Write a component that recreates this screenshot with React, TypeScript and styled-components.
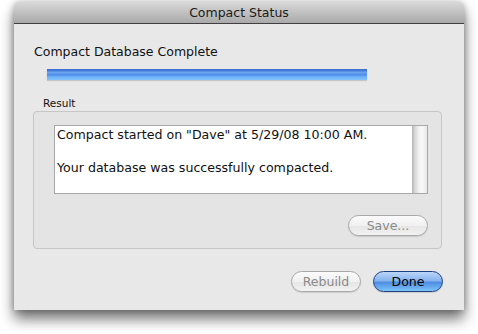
import React from "react";
import styled, { createGlobalStyle } from "styled-components";

const Global = createGlobalStyle`
  html, body { margin: 0; padding: 0; background: #ffffff; }
  body { font-family: "DejaVu Sans", "Liberation Sans", sans-serif; }
  * { box-sizing: border-box; }
`;

const Page = styled.div`
  width: 478px;
  height: 334px;
  padding: 2px 0 0 14px;
  overflow: hidden;
`;

const Window = styled.div`
  width: 450px;
  height: 308px;
  background: #e8e8e8;
  border-radius: 5px 5px 0 0;
  box-shadow: 0 9px 14px rgba(0, 0, 0, 0.55), 0 0 6px rgba(0, 0, 0, 0.25);
  display: flex;
  flex-direction: column;
`;

const TitleBar = styled.div`
  height: 22px;
  border-radius: 5px 5px 0 0;
  background: linear-gradient(#d8d8d8, #a9a9a9);
  border-bottom: 1px solid #404040;
  display: flex;
  align-items: center;
  justify-content: center;
  font-size: 12.5px;
  color: #1a1a1a;
  padding-bottom: 1px;
`;

const Body = styled.div`
  flex: 1;
  display: flex;
  flex-direction: column;
  padding: 20px 21px 0 19px;
`;

const Heading = styled.div`
  font-size: 12.5px;
  line-height: 16px;
  color: #111;
  margin-left: 1px;
`;

const Progress = styled.div`
  margin: 9px 0 0 14px;
  width: 320px;
  height: 11px;
  background: linear-gradient(
    #3a6ccf 0%,
    #4a80e0 18%,
    #6aa6f2 30%,
    #5a95ea 45%,
    #4f8ce6 55%,
    #6db0f8 70%,
    #84c4fc 100%
  );
  box-shadow: 0 1px 1px rgba(0, 0, 0, 0.15);
`;

const GroupLabel = styled.div`
  font-size: 10.5px;
  line-height: 13px;
  color: #111;
  margin: 17px 0 1px 10px;
`;

const Group = styled.div`
  width: 409px;
  height: 138px;
  border: 1px solid #c6c6c6;
  border-radius: 4px;
  background: #e4e4e4;
  padding: 13px 13px 0 20px;
  display: flex;
  flex-direction: column;
  align-items: flex-end;
`;

const TextBox = styled.div`
  width: 374px;
  height: 69px;
  border: 1px solid #a8a8a8;
  background: #ffffff;
  display: flex;
`;

const TextContent = styled.div`
  flex: 1;
  padding: 1px 2px 0 2px;
  font-size: 12.6px;
  line-height: 16.5px;
  color: #111;
  white-space: pre;
`;

const ScrollTrack = styled.div`
  width: 15px;
  background: linear-gradient(
    to right,
    #b4b4b4 0%,
    #d8d8d8 20%,
    #f4f4f4 50%,
    #f8f8f8 70%,
    #e6e6e6 100%
  );
`;

const Button = styled.button<{ $primary?: boolean; $w: number }>`
  width: ${(p) => p.$w}px;
  height: 21px;
  border-radius: 11px;
  font-family: inherit;
  font-size: 12.5px;
  padding: 0 0 1px 0;
  border: 1px solid ${(p) => (p.$primary ? "#1f3f86" : "#a9a9a9")};
  color: ${(p) => (p.$primary ? "#000" : "#8a8a8a")};
  background: ${(p) =>
    p.$primary
      ? "linear-gradient(#bcd6f8 0%, #86b4ee 45%, #4f8de4 55%, #7cc4fb 100%)"
      : "linear-gradient(#fbfbfb 0%, #f0f0f0 50%, #e6e6e6 55%, #f2f2f2 100%)"};
  box-shadow: 0 1px 1px rgba(0, 0, 0, 0.12);
`;

const SaveButton = styled(Button)`
  margin-top: 21px;
`;

const Footer = styled.div`
  display: flex;
  justify-content: flex-end;
  gap: 12px;
  margin-top: 22px;
`;

export default function App() {
  return (
    <>
      <Global />
      <Page>
        <Window>
          <TitleBar>Compact Status</TitleBar>
          <Body>
            <Heading>Compact Database Complete</Heading>
            <Progress />
            <GroupLabel>Result</GroupLabel>
            <Group>
              <TextBox>
                <TextContent>
                  {'Compact started on "Dave" at 5/29/08 10:00 AM.\n\nYour database was successfully compacted.'}
                </TextContent>
                <ScrollTrack />
              </TextBox>
              <SaveButton $w={80} disabled>
                Save...
              </SaveButton>
            </Group>
            <Footer>
              <Button $w={70} disabled>
                Rebuild
              </Button>
              <Button $w={70} $primary>
                Done
              </Button>
            </Footer>
          </Body>
        </Window>
      </Page>
    </>
  );
}
